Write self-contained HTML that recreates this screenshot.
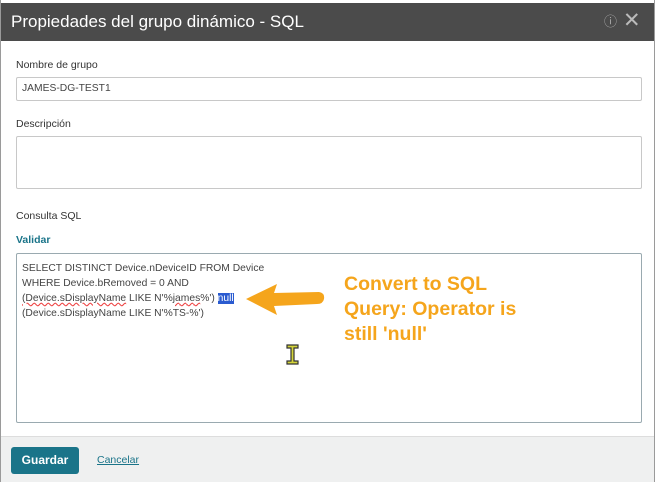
<!DOCTYPE html>
<html><head><style>
body{margin:0;width:655px;height:483px;background:#fff;font-family:"Liberation Sans",sans-serif;position:relative;overflow:hidden}
.win{position:absolute;left:0;top:0;width:653px;height:481px;border:1px solid #9a9a9a;border-top:none;background:#fff}
.hdr{position:absolute;left:0;top:3px;width:653px;height:38px;background:#4b4b4b;color:#fff;font-size:17px;line-height:38px;padding-left:10px;box-sizing:border-box}
.lbl{position:absolute;left:15px;font-size:10.5px;color:#333}
.box{position:absolute;left:15px;width:626px;border:1px solid #c8c8c8;border-radius:2px;box-sizing:border-box}
.ftr{position:absolute;left:0;top:436px;width:653px;height:45px;background:#eff0f0;border-top:1px solid #ddd}
.sql{font-size:10.3px;color:#444;line-height:15px;position:absolute;left:21px;top:261px}
.ann{position:absolute;left:343px;top:272px;color:#f5a51c;font-weight:bold;font-size:19.5px;line-height:25px}
</style></head><body>
<div class="win">
<div class="hdr">Propiedades del grupo dinámico - SQL
<span style="position:absolute;left:603px;top:0;font-size:13px;color:#aaa">&#9432;</span>
<span style="position:absolute;left:622px;top:-1px;font-size:21px;color:#bbb">✕</span></div>
<div class="lbl" style="top:59px">Nombre de grupo</div>
<div class="box" style="top:77px;height:24px;font-size:10.3px;color:#444;line-height:22px;padding-left:5px">JAMES-DG-TEST1</div>
<div class="lbl" style="top:118px">Descripción</div>
<div class="box" style="top:136px;height:53px"></div>
<div class="lbl" style="top:210px">Consulta SQL</div>
<div class="lbl" style="top:234px;color:#1a7489;font-weight:bold">Validar</div>
<div class="box" style="top:253px;height:170px;border-color:#9aaab0"></div>
<div class="sql">SELECT DISTINCT Device.nDeviceID FROM Device<br>WHERE Device.bRemoved = 0 AND<br><span style="text-decoration:underline wavy #e44">(Device.sDisplayName</span> LIKE N'%<span style="text-decoration:underline wavy #e44">james</span>%') <span style="background:#2a5bd0;color:#fff">null</span><br>(Device.sDisplayName LIKE N'%TS-%')</div>
<div class="ann">Convert to SQL<br>Query: Operator is<br>still 'null'</div>
<svg style="position:absolute;left:240px;top:280px" width="90" height="40"><path d="M5 19 L36 4 L33 13 L78 12 Q84 13 83 19 Q82 24 76 24 L33 26 L36 35 Z" fill="#f5a51c"/></svg>
<svg style="position:absolute;left:284px;top:343px" width="16" height="24"><path d="M2 2 H13 V5 H9 V18 H13 V21 H2 V18 H6 V5 H2 Z" fill="#d4d43a" stroke="#333" stroke-width="1.2"/></svg>
<div class="ftr">
<div style="position:absolute;left:10px;top:10px;width:68px;height:27px;background:#1a7489;border-radius:3px;color:#fff;font-weight:bold;font-size:12px;text-align:center;line-height:27px">Guardar</div>
<div style="position:absolute;left:96px;top:17px;font-size:10.5px;color:#1a7489;text-decoration:underline">Cancelar</div>
</div>
</div>
</body></html>
